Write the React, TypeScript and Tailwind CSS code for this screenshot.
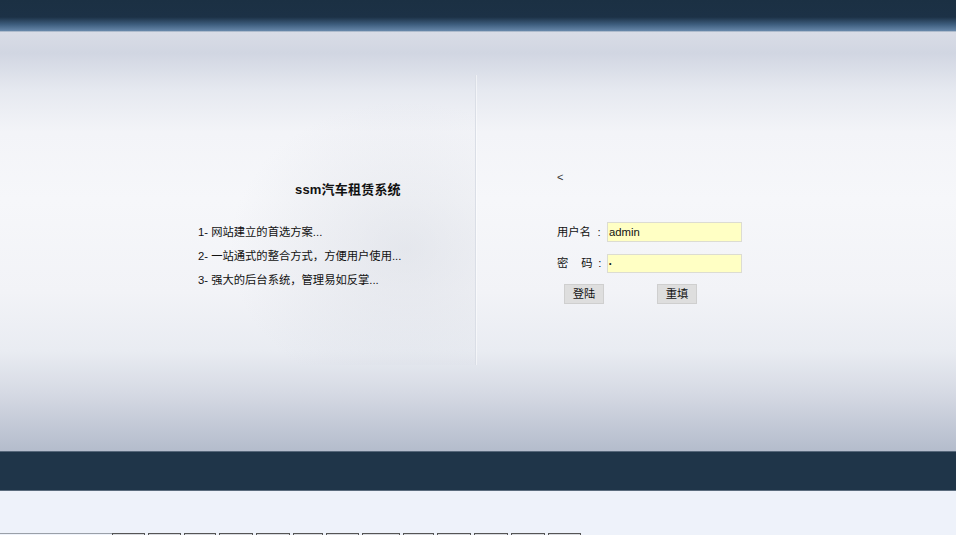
import React from 'react';

const FEATURES = [
  '1- 网站建立的首选方案...',
  '2- 一站通式的整合方式，方便用户使用...',
  '3- 强大的后台系统，管理易如反掌...',
];

const TABS = [33, 33, 32, 34, 34, 30, 33, 38, 31, 34, 34, 34, 33];

export default function App() {
  return (
    <div className="w-[956px] h-[535px] overflow-hidden bg-[#eef2fa] text-[11.3px] text-[#111]" style={{ fontFamily: '"Liberation Sans", Arial, "Noto Sans CJK SC", sans-serif' }}>
      {/* top bar */}
      <div className="h-[32px] border-b border-[#aebbcc] bg-[linear-gradient(to_bottom,#1b3043_0%,#1c3146_55%,#3f5f80_80%,#6888aa_100%)]" />

      {/* main area */}
      <div className="h-[419px] pt-[43px] bg-[linear-gradient(to_bottom,#d9dce6_0%,#d1d6e2_5%,#e6e9f0_14%,#f3f4f8_24%,#f6f7fa_40%,#f2f3f7_62%,#e9ecf2_76%,#d6dae4_86%,#b4bccc_100%)]">
        <div className="flex h-[290px] pl-[198px]">
          <div className="w-[277px] bg-[radial-gradient(ellipse_at_75%_60%,rgba(200,205,215,0.35),transparent_60%)]">
            <h1 className="pt-[105px] pl-[97px] text-[13px] leading-[20px] font-bold tracking-[0.2px]">ssm汽车租赁系统</h1>
            <ul className="mt-[23px] flex flex-col gap-[6px]">
              {FEATURES.map(f => (
                <li key={f} className="leading-[18px]">{f}</li>
              ))}
            </ul>
          </div>
          <div className="w-px bg-[#dadee6] shadow-[1px_0_0_rgba(255,255,255,0.5)]" />
          <div className="pl-[81px] pt-[95px]">
            <div className="leading-[14px] text-[11px] text-[#333]">&lt;</div>
            <form className="mt-[38px] flex flex-col gap-[12px]">
              <label className="flex items-center">
                <span className="w-[50px] flex"><span>用户名</span><span className="flex-1 text-center">:</span></span>
                <input defaultValue="admin" className="w-[135px] h-[20px] px-[1px] border border-[#dcdcd2] bg-[#ffffc4] text-[11.3px] outline-none" />
              </label>
              <label className="flex items-center">
                <span className="w-[50px] flex"><span>密</span><span className="pl-[13px]">码</span><span className="flex-1 text-center">:</span></span>
                <input type="password" defaultValue="1" className="w-[135px] h-[19px] px-[1px] border border-[#dcdcd2] bg-[#ffffc4] text-[7px] outline-none" />
              </label>
              <div className="flex gap-[53px] pl-[7px] -mt-[1px]">
                <button type="button" className="w-[40px] h-[20px] bg-[#dedede] border border-[#cfcfcf] text-[11.3px] leading-[18px]">登陆</button>
                <button type="button" className="w-[40px] h-[20px] bg-[#dedede] border border-[#cfcfcf] text-[11.3px] leading-[18px]">重填</button>
              </div>
            </form>
          </div>
        </div>
      </div>

      {/* footer band */}
      <div className="h-[40px] border-t border-[#56677a] border-b border-b-[#5b6c7d] bg-[#1f3549]" />

      {/* bottom strip */}
      <div className="h-[42px] bg-[#eef2fa]" />
      <div className="flex h-[2px]">
        <div className="w-[112px] border-t border-[#9aa0a8]" />
        {TABS.map((w, i) => (
          <div key={i} className="h-[2px] border-t border-x border-[#555] bg-[#d8dadf] mr-[3px]" style={{ width: w }} />
        ))}
        <div className="flex-1" />
      </div>
    </div>
  );
}
